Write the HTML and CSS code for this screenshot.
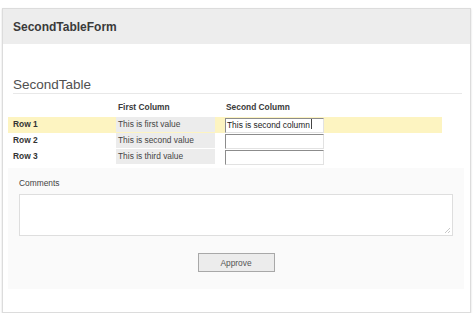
FILE: index.html
```html
<!DOCTYPE html>
<html>
<head>
<meta charset="utf-8">
<link rel="stylesheet" href="styles.css">
</head>
<body>
<div class="card">
  <div class="card-header">SecondTableForm</div>
  <div class="card-body">
    <div class="section-title">SecondTable</div>
    <div class="grid">
      <div class="row head">
        <div class="label"></div>
        <div class="col1">First Column</div>
        <div class="col2">Second Column</div>
      </div>
      <div class="row active">
        <div class="label">Row 1</div>
        <div class="col1 cell">This is first value</div>
        <div class="col2"><div class="field">This is second column<span class="caret"></span></div></div>
      </div>
      <div class="row">
        <div class="label">Row 2</div>
        <div class="col1 cell">This is second value</div>
        <div class="col2"><div class="field"></div></div>
      </div>
      <div class="row">
        <div class="label">Row 3</div>
        <div class="col1 cell">This is third value</div>
        <div class="col2"><div class="field"></div></div>
      </div>
    </div>
    <div class="panel">
      <div class="panel-label">Comments</div>
      <div class="comments-wrap">
        <textarea class="comments"></textarea>
        <svg class="grip" width="7" height="7" viewBox="0 0 7 7"><path d="M6 1 L1 6 M6 4 L4 6" stroke="#c8c8c8" stroke-width="1" fill="none"/></svg>
      </div>
      <div class="actions"><button class="btn">Approve</button></div>
    </div>
  </div>
</div>
</body>
</html>
```
FILE: styles.css
```css
html, body {
  margin: 0;
  padding: 0;
  background: #ffffff;
  font-family: "Liberation Sans", Arial, sans-serif;
  color: #333;
}
.card {
  margin: 8px 3px 0 2px;
  border: 1px solid #dcdcdc;
  box-shadow: 0 1px 2px rgba(0,0,0,0.15);
  background: #fff;
}
.card-header {
  height: 35px;
  background: #ededed;
  padding: 0 10px;
  display: flex;
  align-items: center;
  font-weight: bold;
  font-size: 12px;
  color: #3a3a3a;
}
.card-body {
  padding: 0 6px 23px 5px;
}
.section-title {
  margin: 32px 2px 0 5px;
  font-size: 13.5px;
  line-height: 17px;
  color: #505050;
  border-bottom: 1px solid #e8e8e8;
}
.grid {
  display: flex;
  flex-direction: column;
}
.row {
  display: flex;
  height: 16px;
  padding-left: 5px;
  width: 429px;
  font-size: 8.4px;
  line-height: 15px;
}
.row.head {
  height: 23px;
  align-items: flex-end;
  line-height: 10px;
  padding-bottom: 5px;
  box-sizing: border-box;
  font-weight: bold;
  color: #3a3a3a;
}
.row.active {
  background: #fdf4c1;
}
.label {
  width: 103px;
  font-weight: bold;
  color: #333;
}
.col1 {
  width: 99px;
  padding-left: 2px;
  box-sizing: border-box;
}
.cell {
  height: 15px;
  background: #ececec;
  color: #444;
}
.col2 {
  margin-left: 10px;
  width: 99px;
  padding-left: 1px;
  box-sizing: border-box;
}
.row:not(.head) .col2 {
  padding-left: 0;
}
.field {
  margin-top: 1px;
  height: 15px;
  box-sizing: border-box;
  border: 1px solid #e2e2e2;
  border-top-color: #8c8c8c;
  border-left-color: #8c8c8c;
  background: #fff;
  line-height: 13px;
  padding-left: 1px;
  color: #222;
  white-space: nowrap;
}
.caret {
  display: inline-block;
  width: 1px;
  height: 10px;
  margin-left: 1px;
  background: #444;
  vertical-align: -1px;
}
.panel {
  margin-top: 3px;
  background: #fafafa;
  padding: 10px 11px 17px 11px;
  display: flex;
  flex-direction: column;
}
.panel-label {
  font-size: 8.4px;
  line-height: 10px;
  color: #444;
}
.comments-wrap {
  position: relative;
  margin-top: 6px;
  height: 42px;
}
.comments {
  display: block;
  width: 100%;
  height: 42px;
  margin: 0;
  box-sizing: border-box;
  border: 1px solid #dedede;
  background: #fff;
  resize: none;
  padding: 2px;
  font-family: "Liberation Sans", Arial, sans-serif;
}
.grip {
  position: absolute;
  right: 2px;
  bottom: 2px;
}
.actions {
  display: flex;
  justify-content: center;
  margin-top: 17px;
}
.btn {
  width: 77px;
  height: 19px;
  margin: 0;
  padding: 0;
  box-sizing: border-box;
  border: 1px solid #a8a8a8;
  background: #ececec;
  font-family: "Liberation Sans", Arial, sans-serif;
  font-size: 8.4px;
  color: #555;
}
```
